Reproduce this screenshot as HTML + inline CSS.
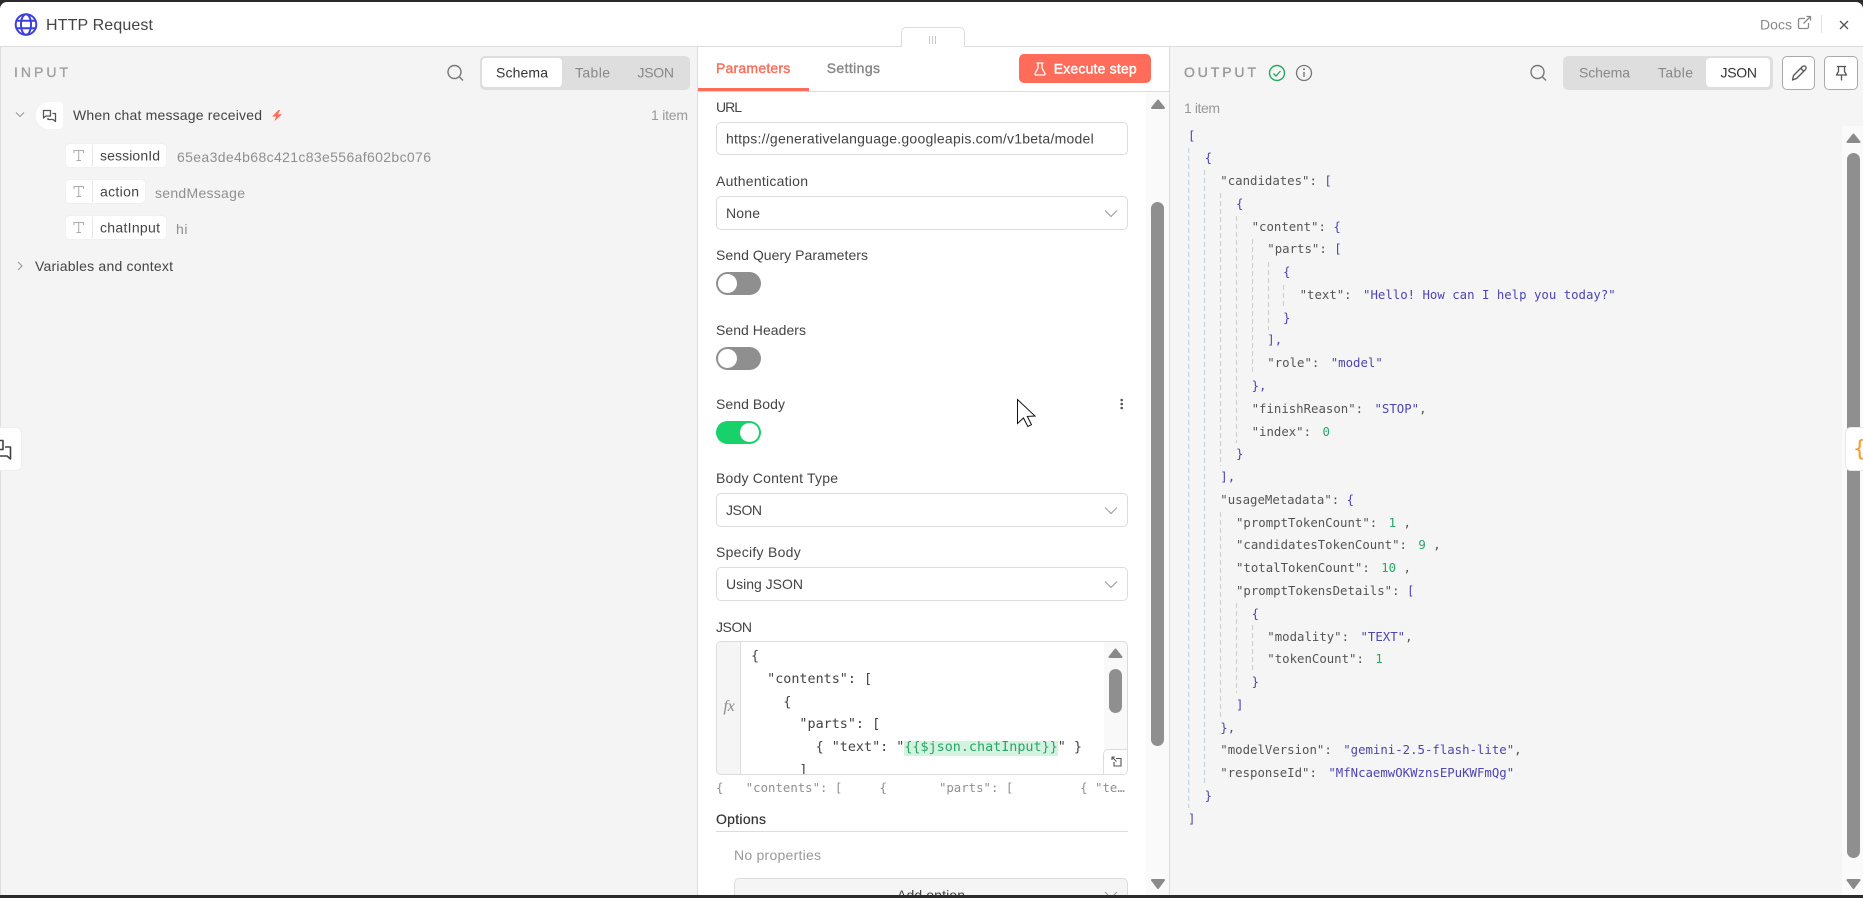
<!DOCTYPE html>
<html lang="en"><head><meta charset="utf-8"><title>HTTP Request</title>
<style>
html,body{margin:0;padding:0;width:1863px;height:898px;overflow:hidden;background:#2b2b2b;font-family:"Liberation Sans",sans-serif}
#root{position:absolute;left:0;top:0;width:1863px;height:898px;overflow:hidden;background:#2b2b2b}
.a{position:absolute;box-sizing:border-box}
#modal{left:0;top:2px;width:1863px;height:893px;background:#fff;border-radius:7px 7px 0 0;overflow:hidden}
.sel{left:716px;width:412px;background:#fff;border:1px solid #dcdcdc;border-radius:5px}
.pill{left:65px;height:25px;background:#fff;border:1px solid #f0f0f0;border-radius:5px}
.tg{left:716px;width:45px;height:23px;border-radius:12px;background:#8f8f8f}
.tg i{position:absolute;top:2px;left:2px;width:19px;height:19px;border-radius:50%;background:#fff}
.grp{top:56px;height:34px;width:210px;background:#dedede;border-radius:5px}
.act{top:58px;height:29px;background:#fff;border-radius:4px}
.ib{top:56px;height:34px;background:#fff;border:1px solid #aaa;border-radius:5px}
.m{position:absolute;margin:0;white-space:pre;font-family:"DejaVu Sans Mono","Liberation Mono",monospace}
.j{font-size:12.35px;line-height:20px;height:20px;color:#555}
.j b{font-weight:normal;color:#4c45b3}
.j em{font-style:normal;color:#4c45b3;margin-left:4px}
.j u{text-decoration:none;color:#2aa568;margin-left:4px}
.c{font-size:13.42px;line-height:20px;height:20px;color:#444}
svg{position:absolute;left:0;top:0}
svg text{font-family:"Liberation Sans",sans-serif}
</style></head><body>
<div id="root">

<div class="a" id="modal"></div>

<div class="a" style="left:0;top:47px;width:698px;height:848px;background:#f4f4f4;border-left:1px solid #ddd"></div>
<div class="a" style="left:1170px;top:47px;width:693px;height:848px;background:#f5f5f5"></div>
<div class="a" style="left:0;top:46px;width:1863px;height:1px;background:#dcdcdc"></div>
<div class="a" style="left:697px;top:46px;width:1px;height:849px;background:#dcdcdc"></div>
<div class="a" style="left:1169px;top:46px;width:1px;height:849px;background:#dcdcdc"></div>
<div class="a" style="left:698px;top:91px;width:471px;height:1px;background:#dcdcdc"></div>
<div class="a" style="left:698px;top:88px;width:111px;height:3px;background:#ff6d5a"></div>
<div class="a" style="left:901px;top:27px;width:64px;height:20px;background:#fff;border:1px solid #dcdcdc;border-bottom:0;border-radius:5px 5px 0 0"></div>
<div class="a" style="left:1146px;top:92px;width:23px;height:803px;background:#fafafa"></div>
<div class="a" style="left:1842px;top:126px;width:21px;height:769px;background:#fafafa"></div>
<div class="a" style="left:1151px;top:202px;width:13px;height:544px;background:#8f8f8f;border-radius:7px"></div>
<div class="a" style="left:1847px;top:153px;width:13px;height:705px;background:#8f8f8f;border-radius:7px"></div>

<div class="a" style="left:1019px;top:54px;width:132px;height:29px;background:#ff6d5a;border-radius:5px"></div>

<div class="a grp" style="left:480px"></div>
<div class="a act" style="left:482px;width:80px"></div>
<div class="a grp" style="left:1563px"></div>
<div class="a act" style="left:1706px;width:64px"></div>
<div class="a ib" style="left:1782px;width:33px"></div>
<div class="a ib" style="left:1824px;width:34px"></div>

<div class="a" style="left:36px;top:102px;width:27px;height:27px;background:#fff;border-radius:13px 4px 4px 13px"></div>
<div class="a pill" style="top:143px;width:102px"></div>
<div class="a pill" style="top:179px;width:81px"></div>
<div class="a pill" style="top:215px;width:102px"></div>
<div class="a" style="left:92px;top:145px;width:1px;height:21px;background:#e8e8e8"></div>
<div class="a" style="left:92px;top:181px;width:1px;height:21px;background:#e8e8e8"></div>
<div class="a" style="left:92px;top:217px;width:1px;height:21px;background:#e8e8e8"></div>

<div class="a sel" style="top:122px;height:33px"></div>
<div class="a sel" style="top:196px;height:34px"></div>
<div class="a sel" style="top:493px;height:34px"></div>
<div class="a sel" style="top:567px;height:34px"></div>

<div class="a tg" style="top:272px"><i></i></div>
<div class="a tg" style="top:347px"><i></i></div>
<div class="a tg" style="top:421px;background:#17d16a"><i style="left:24px"></i></div>

<div class="a" style="left:716px;top:641px;width:412px;height:134px;background:#fff;border:1px solid #dcdcdc;border-radius:5px;overflow:hidden">
  <div class="a" style="left:0;top:0;width:24px;height:132px;background:#f5f5f5;border-right:1px solid #dcdcdc"></div>
  <div class="a" style="left:187px;top:99px;width:154px;height:15px;background:#d4f2e0"></div>
  <pre class="m c" style="left:34px;top:5px">{</pre>
  <pre class="m c" style="left:34px;top:28px">  "contents": [</pre>
  <pre class="m c" style="left:34px;top:50.5px">    {</pre>
  <pre class="m c" style="left:34px;top:73px">      "parts": [</pre>
  <pre class="m c" style="left:34px;top:96px">        { "text": "<span style="color:#2aa568">{{$json.chatInput}}</span>" }</pre>
  <pre class="m c" style="left:34px;top:118.5px">      ]</pre>
  <div class="a" style="left:387px;top:0;width:24px;height:132px;background:#f9f9f9"></div>
  <div class="a" style="left:392px;top:27px;width:13px;height:44px;background:#8f8f8f;border-radius:7px"></div>
  <div class="a" style="left:386px;top:107px;width:26px;height:26px;background:#fff;border:1px solid #dcdcdc;border-radius:5px 0 5px 0"></div>
</div>
<pre class="m" style="left:716px;top:779px;width:412px;height:18px;line-height:18px;font-size:12.35px;color:#909090;overflow:hidden;text-overflow:ellipsis">{   "contents": [     {       "parts": [         { "text": "{{$json.chatInput}}" }</pre>
<div class="a" style="left:716px;top:831px;width:412px;height:1px;background:#dcdcdc"></div>
<div class="a" style="left:734px;top:878px;width:394px;height:30px;background:#f5f5f5;border:1px solid #dcdcdc;border-radius:5px"></div>

<div class="a" style="left:0;top:-2.200px;width:1863px;height:898px">
<pre class="m j" style="left:1188px;top:127.700px"><b>[</b></pre>
<pre class="m j" style="left:1204.600px;top:150.500px"><b>{</b></pre>
<pre class="m j" style="left:1220.300px;top:173.200px">"candidates": <b>[</b></pre>
<pre class="m j" style="left:1236px;top:196px"><b>{</b></pre>
<pre class="m j" style="left:1251.600px;top:218.800px">"content": <b>{</b></pre>
<pre class="m j" style="left:1267.300px;top:241.600px">"parts": <b>[</b></pre>
<pre class="m j" style="left:1283px;top:264.300px"><b>{</b></pre>
<pre class="m j" style="left:1299.600px;top:287.100px">"text": <em>"Hello! How can I help you today?"</em></pre>
<pre class="m j" style="left:1283px;top:309.900px"><b>}</b></pre>
<pre class="m j" style="left:1267.300px;top:332.600px"><b>],</b></pre>
<pre class="m j" style="left:1267.300px;top:355.400px">"role": <em>"model"</em></pre>
<pre class="m j" style="left:1251.600px;top:378.200px"><b>},</b></pre>
<pre class="m j" style="left:1251.600px;top:400.900px">"finishReason": <em>"STOP"</em>,</pre>
<pre class="m j" style="left:1251.600px;top:423.700px">"index": <u>0</u></pre>
<pre class="m j" style="left:1236px;top:446.500px"><b>}</b></pre>
<pre class="m j" style="left:1220.300px;top:469.300px"><b>],</b></pre>
<pre class="m j" style="left:1220.300px;top:492px">"usageMetadata": <b>{</b></pre>
<pre class="m j" style="left:1236px;top:514.800px">"promptTokenCount": <u>1</u> ,</pre>
<pre class="m j" style="left:1236px;top:537.600px">"candidatesTokenCount": <u>9</u> ,</pre>
<pre class="m j" style="left:1236px;top:560.300px">"totalTokenCount": <u>10</u> ,</pre>
<pre class="m j" style="left:1236px;top:583.100px">"promptTokensDetails": <b>[</b></pre>
<pre class="m j" style="left:1251.600px;top:605.900px"><b>{</b></pre>
<pre class="m j" style="left:1267.300px;top:628.700px">"modality": <em>"TEXT"</em>,</pre>
<pre class="m j" style="left:1267.300px;top:651.400px">"tokenCount": <u>1</u></pre>
<pre class="m j" style="left:1251.600px;top:674.200px"><b>}</b></pre>
<pre class="m j" style="left:1236px;top:697px"><b>]</b></pre>
<pre class="m j" style="left:1220.300px;top:719.700px"><b>},</b></pre>
<pre class="m j" style="left:1220.300px;top:742.500px">"modelVersion": <em>"gemini-2.5-flash-lite"</em>,</pre>
<pre class="m j" style="left:1220.300px;top:765.300px">"responseId": <em>"MfNcaemwOKWznsEPuKWFmQg"</em></pre>
<pre class="m j" style="left:1204.600px;top:788px"><b>}</b></pre>
<pre class="m j" style="left:1188px;top:810.800px"><b>]</b></pre>
</div>

<div class="a" style="left:0;top:427px;width:22px;height:44px;background:#fff;border:1px solid #eee;border-left:0;border-radius:0 6px 6px 0"></div>
<div class="a" style="left:1845px;top:427px;width:18px;height:44px;background:#fff;border:1px solid #e8e8e8;border-right:0;border-radius:6px 0 0 6px"></div>

<svg width="1863" height="898" viewBox="0 0 1863 898" xmlns="http://www.w3.org/2000/svg">
<!-- Header -->
<g fill="none" stroke="#3c3fe0" stroke-width="2"><circle cx="26" cy="24.5" r="10.3"/><ellipse cx="26" cy="24.5" rx="5" ry="10.3"/><path d="M16.5 20.8h19M16.5 28.2h19"/></g>
<text x="46" y="30" font-size="16" fill="#444" textLength="107">HTTP Request</text>
<text x="1760" y="29.5" font-size="14" fill="#888" textLength="32">Docs</text>
<g fill="none" stroke="#888" stroke-width="1.3"><path d="M1805 18.5h-5a1.5 1.5 0 0 0-1.500 1.500v7a1.500 1.500 0 0 0 1.500 1.500h7a1.500 1.500 0 0 0 1.500-1.500v-4"/><path d="M1803.500 23.500l7-7M1806.500 16.500h4v4"/></g>
<rect x="1821" y="15" width="1" height="18" fill="#e2e2e2"/>
<path d="M1840 21l8 8M1848 21l-8 8" stroke="#555" stroke-width="1.300" fill="none"/>
<g stroke="#c8c8c8" stroke-width="1"><path d="M929.500 36v8M932.500 36v8M935.500 36v8"/></g>

<!-- Input panel -->
<text x="14" y="77" font-size="14" fill="#a0a0a0" stroke="#a0a0a0" stroke-width=".35" textLength="54">INPUT</text>
<g fill="none" stroke="#777" stroke-width="1.400"><circle cx="454.500" cy="72" r="6.500"/><path d="M459.500 77l3.500 3.500"/></g>
<text x="496" y="77.500" font-size="14" fill="#333" textLength="52">Schema</text>
<text x="575" y="77.500" font-size="14" fill="#888" textLength="35">Table</text>
<text x="637.500" y="77.500" font-size="14" fill="#888" textLength="36.500">JSON</text>
<path d="M16 112.500l4 4 4-4" fill="none" stroke="#999" stroke-width="1.100"/>
<g fill="none" stroke="#555" stroke-width="1.300" stroke-linejoin="round"><path d="M43.500 110.500h7v5.500h-4.500l-2.500 2z"/><path d="M52.500 113.500h3v8l-2.500-2h-5v-1.500"/></g>
<text x="73" y="120" font-size="14" fill="#444" textLength="189">When chat message received</text>
<path d="M278.500 110L272 116.500h4l-1.500 4.800 7.500-7h-4l2.200-4.300z" fill="#ff6d5a"/>
<text x="651" y="120" font-size="14" fill="#999" textLength="37">1 item</text>
<g fill="none" stroke="#aaa" stroke-width="1"><path d="M74 153v-2.500h9.500v2.500M78.700 150.500v10M76.500 160.500h4.500"/><path d="M74 189v-2.500h9.500v2.500M78.700 186.500v10M76.500 196.500h4.500"/><path d="M74 225v-2.500h9.500v2.500M78.700 222.500v10M76.500 232.500h4.500"/></g>
<text x="100" y="160.500" font-size="14" fill="#444" textLength="60">sessionId</text>
<text x="100" y="196.500" font-size="14" fill="#444" textLength="39">action</text>
<text x="100" y="232.500" font-size="14" fill="#444" textLength="60">chatInput</text>
<text x="177" y="162" font-size="14" fill="#8f8f8f" textLength="254">65ea3de4b68c421c83e556af602bc076</text>
<text x="155" y="198" font-size="14" fill="#8f8f8f" textLength="90">sendMessage</text>
<text x="176" y="234" font-size="14" fill="#8f8f8f" textLength="11.500">hi</text>
<path d="M18 262l4 4-4 4" fill="none" stroke="#999" stroke-width="1.100"/>
<text x="35" y="271" font-size="14" fill="#444" textLength="138">Variables and context</text>
<g fill="none" stroke="#444" stroke-width="1.600" stroke-linejoin="round"><path d="M-4 440.500h7v9h-7M5 447h5.500v12l-3.500-3h-7.500"/></g>

<!-- Parameters -->
<text x="716" y="73" font-size="14" fill="#ff6d5a" stroke="#ff6d5a" stroke-width=".4" textLength="74.300">Parameters</text>
<text x="826.700" y="73" font-size="14" fill="#888" stroke="#888" stroke-width=".4" textLength="53.300">Settings</text>
<g fill="none" stroke="#fff" stroke-width="1.300" stroke-linejoin="round"><path d="M1036.500 63h7M1038 63v5l-3 5.500a1 1 0 0 0 1 1.500h8a1 1 0 0 0 1-1.500l-3-5.500v-5"/></g>
<text x="1053.700" y="73.500" font-size="14" fill="#fff" stroke="#fff" stroke-width=".4" textLength="83">Execute step</text>
<text x="716" y="112" font-size="14" fill="#444" textLength="26">URL</text>
<text x="726" y="143.500" font-size="14" fill="#444" textLength="367.700">https://generativelanguage.googleapis.com/v1beta/model</text>
<text x="716" y="186" font-size="14" fill="#444" textLength="92">Authentication</text>
<text x="726" y="218" font-size="14" fill="#444" textLength="34">None</text>
<text x="716" y="260" font-size="14" fill="#444" textLength="152">Send Query Parameters</text>
<text x="716" y="335" font-size="14" fill="#444" textLength="90">Send Headers</text>
<text x="716" y="409" font-size="14" fill="#444" textLength="69">Send Body</text>
<text x="716" y="483" font-size="14" fill="#444" textLength="122">Body Content Type</text>
<text x="726" y="515" font-size="14" fill="#444" textLength="36">JSON</text>
<text x="716" y="557" font-size="14" fill="#444" textLength="84.700">Specify Body</text>
<text x="726" y="589" font-size="14" fill="#444" textLength="77">Using JSON</text>
<text x="716" y="632" font-size="14" fill="#444" textLength="36">JSON</text>
<text x="716" y="824" font-size="14" fill="#333" textLength="50" stroke="#333" stroke-width="0.200">Options</text>
<text x="734" y="860" font-size="14" fill="#999" textLength="87">No properties</text>
<text x="897" y="900" font-size="14" fill="#444" textLength="68">Add option</text>
<g fill="none" stroke="#999" stroke-width="1"><path d="M1105 210.500l6 6 6-6M1105 507.500l6 6 6-6M1105 581.500l6 6 6-6M1105 892l6 6 6-6"/></g>
<g fill="#555"><circle cx="1121.700" cy="400" r="1.300"/><circle cx="1121.700" cy="404" r="1.300"/><circle cx="1121.700" cy="408" r="1.300"/></g>
<text x="723.500" y="711" font-size="15.500" font-style="italic" fill="#888" style="font-family:'Liberation Serif',serif">fx</text>
<g fill="none" stroke="#555" stroke-width="1.100"><path d="M1112 757l4.500 4.500M1112 760v-3h3M1116 758.500h5v7.500h-7v-4"/></g>
<path d="M1017.500 399.500v24l6-5.500 4.300 8.500 3.700-1.800-4.200-8.300 7.700-.4z" fill="#fff" stroke="#111" stroke-width="1" stroke-linejoin="miter"/>

<!-- Scroll arrows -->
<g fill="#8a8a8a" stroke="#8a8a8a" stroke-width="2" stroke-linejoin="round">
<path d="M1158 100.500l-6 7.500h12zM1853.500 134.500l-6 7.500h12zM1115.500 649.500l-6 7.500h12z"/>
<path d="M1158 888l-6-8h12zM1853.500 888l-6-8h12z"/>
</g>

<!-- Output -->
<text x="1184" y="77" font-size="14" fill="#999" stroke="#999" stroke-width=".35" textLength="72">OUTPUT</text>
<g fill="none"><circle cx="1277" cy="73" r="7.500" stroke="#22a860" stroke-width="1.400"/><path d="M1273.500 73.500l2.500 2.500 4.500-5" stroke="#22a860" stroke-width="1.300"/>
<circle cx="1304" cy="73" r="7.500" stroke="#777" stroke-width="1.300"/><path d="M1304 72v5" stroke="#777" stroke-width="1.400"/></g><circle cx="1304" cy="69.300" r="1" fill="#777"/>
<g fill="none" stroke="#777" stroke-width="1.400"><circle cx="1537.500" cy="72" r="6.500"/><path d="M1542.500 77l3.500 3.500"/></g>
<text x="1579" y="77.500" font-size="14" fill="#888" textLength="51">Schema</text>
<text x="1658" y="77.500" font-size="14" fill="#888" textLength="35">Table</text>
<text x="1720.500" y="77.500" font-size="14" fill="#333" textLength="36.500">JSON</text>
<g fill="none" stroke="#555" stroke-width="1.300" stroke-linejoin="round"><path d="M1792.500 80l1-4.500 9-9a2 2 0 0 1 3 3l-9 9z"/><path d="M1801 68.500l3 3"/></g>
<g fill="none" stroke="#555" stroke-width="1.300" stroke-linejoin="round"><path d="M1837 66.500h9M1838.500 66.500v5l-2 3.500h10l-2-3.500v-5M1841.500 75v5.500"/></g>
<text x="1184" y="113" font-size="14" fill="#999" textLength="36">1 item</text>
<g fill="none" stroke-width="1" stroke-dasharray="5 3">
<path d="M1188.700 148V808" stroke="#bccbd8"/>
<path d="M1204.500 170V785" stroke="#c6d0d8"/>
<path d="M1220.500 193V466M1220.500 512V717" stroke="#ccc"/>
<path d="M1236.500 216V443M1236.500 603V693" stroke="#ccc"/>
<path d="M1252.500 239V375M1252.500 625V672" stroke="#ccc"/>
<path d="M1268.500 262V330" stroke="#ccc"/>
<path d="M1283.500 285V307" stroke="#ccc"/>
</g>
<text x="1853" y="456" font-size="22" fill="#f79a2a" style="font-family:'DejaVu Sans Mono',monospace">{</text>
</svg>

<div class="a" style="left:0;top:894.500px;width:1863px;height:3.500px;background:#2b2b2b"></div>
</div>
</body></html>
